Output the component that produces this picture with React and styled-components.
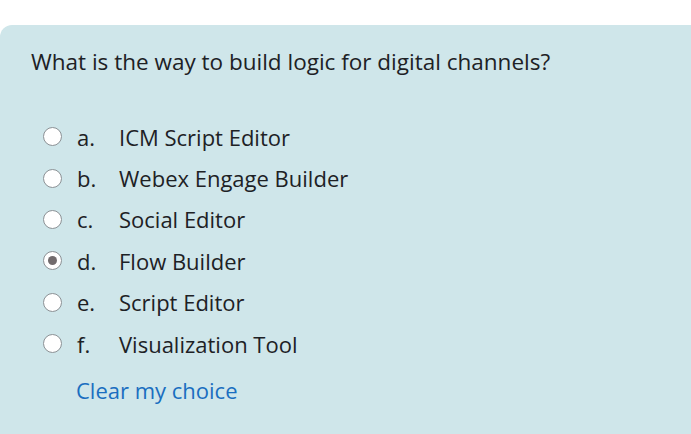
import React, { useState } from "react";
import styled, { createGlobalStyle } from "styled-components";

const GlobalStyle = createGlobalStyle`
  html, body {
    margin: 0;
    padding: 0;
    background: #ffffff;
  }
  body {
    font-family: "Open Sans", "Noto Sans", sans-serif;
  }
`;

const Page = styled.div`
  width: 691px;
  height: 434px;
  padding-top: 25px;
  box-sizing: border-box;
  overflow: hidden;
`;

const Panel = styled.div`
  background: #cfe6ea;
  border-top-left-radius: 12px;
  height: 100%;
  padding: 22px 0 0 31px;
  box-sizing: border-box;
`;

const Question = styled.div`
  color: #1d2125;
  font-size: 22.5px;
  line-height: 30px;
  margin-bottom: 39px;
`;

const Options = styled.div`
  display: flex;
  flex-direction: column;
  padding-left: 12px;
`;

const Option = styled.label`
  display: flex;
  align-items: center;
  height: 41.4px;
  color: #1d2125;
  font-size: 22px;
  cursor: pointer;
`;

const Radio = styled.span`
  width: 19px;
  height: 19px;
  box-sizing: border-box;
  border-radius: 50%;
  border: 1.5px solid #8c9195;
  background: #ffffff;
  display: flex;
  align-items: center;
  justify-content: center;
  margin-right: 15px;

  &::after {
    content: "";
    display: ${(p) => (p.$checked ? "block" : "none")};
    width: 9px;
    height: 9px;
    border-radius: 50%;
    background: #716b6d;
  }
`;

const Letter = styled.span`
  width: 42px;
`;

const ClearLink = styled.a`
  display: inline-block;
  margin: 11px 0 0 45px;
  color: #1a6ec0;
  font-size: 22px;
  text-decoration: none;
  cursor: pointer;
`;

const choices = [
  ["a.", "ICM Script Editor"],
  ["b.", "Webex Engage Builder"],
  ["c.", "Social Editor"],
  ["d.", "Flow Builder"],
  ["e.", "Script Editor"],
  ["f.", "Visualization Tool"],
];

export default function App() {
  const [selected, setSelected] = useState(3);
  return (
    <>
      <GlobalStyle />
      <Page>
        <Panel>
          <Question>What is the way to build logic for digital channels?</Question>
          <Options>
            {choices.map(([letter, text], i) => (
              <Option key={letter} onClick={() => setSelected(i)}>
                <Radio $checked={selected === i} />
                <Letter>{letter}</Letter>
                {text}
              </Option>
            ))}
          </Options>
          <ClearLink onClick={() => setSelected(null)}>Clear my choice</ClearLink>
        </Panel>
      </Page>
    </>
  );
}
